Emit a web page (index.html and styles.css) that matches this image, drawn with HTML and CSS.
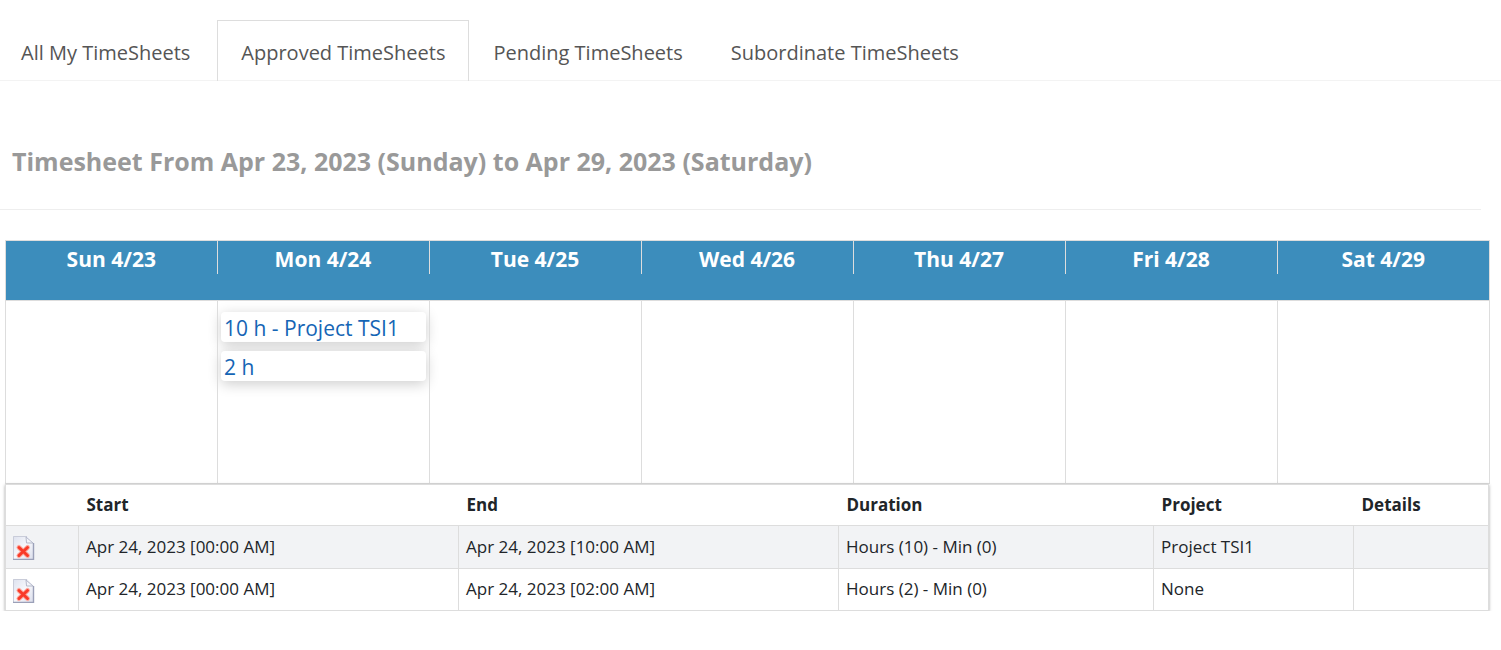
FILE: index.html
```html
<!DOCTYPE html>
<html lang="en">
<head>
    <meta charset="UTF-8">
    <meta name="viewport" content="width=device-width, initial-scale=1.0">
    <title>Approved TimeSheets</title>
    <link rel="stylesheet" href="styles.css">
</head>
<body>
    <svg class="sprite" aria-hidden="true">
        <defs>
            <linearGradient id="paper" x1="0" y1="0" x2="1" y2="1">
                <stop offset="0" stop-color="#dde1ee"/>
                <stop offset="0.5" stop-color="#f7f8fc"/>
                <stop offset="1" stop-color="#d9dcea"/>
            </linearGradient>
        </defs>
        <symbol id="delete-page" viewBox="0 0 22 24">
            <path d="M0 0H14L21 7V24H0Z" fill="url(#paper)"/>
            <path d="M0.5 23V0.5H14" fill="none" stroke="#c9ccd9"/>
            <path d="M20.5 7V23.5H0" fill="none" stroke="#9ba0b8" stroke-width="1.4"/>
            <path d="M13 1L13.5 7H20Z" fill="#f4f5fa" stroke="#b4b8ca"/>
            <path d="M6 11.5L14.5 19.5M14.5 11.5L6 19.5" fill="none" stroke="#fbaaa0" stroke-width="5" stroke-linecap="round"/>
            <path d="M6 11.5L14.5 19.5M14.5 11.5L6 19.5" fill="none" stroke="#f93a28" stroke-width="3" stroke-linecap="round"/>
        </symbol>
    </svg>

    <nav class="tabs">
        <a href="#all">All My TimeSheets</a>
        <a href="#approved" class="active">Approved TimeSheets</a>
        <a href="#pending">Pending TimeSheets</a>
        <a href="#subordinate">Subordinate TimeSheets</a>
    </nav>

    <h1>Timesheet From Apr 23, 2023 (Sunday) to Apr 29, 2023 (Saturday)</h1>

    <div class="content">
        <table class="week">
            <thead>
                <tr>
                    <th><div class="day">Sun 4/23</div></th>
                    <th><div class="day">Mon 4/24</div></th>
                    <th><div class="day">Tue 4/25</div></th>
                    <th><div class="day">Wed 4/26</div></th>
                    <th><div class="day">Thu 4/27</div></th>
                    <th><div class="day">Fri 4/28</div></th>
                    <th><div class="day">Sat 4/29</div></th>
                </tr>
            </thead>
            <tbody>
                <tr>
                    <td></td>
                    <td>
                        <a href="#entry1" class="entry">10 h - Project TSI1</a>
                        <a href="#entry2" class="entry">2 h</a>
                    </td>
                    <td></td>
                    <td></td>
                    <td></td>
                    <td></td>
                    <td></td>
                </tr>
            </tbody>
        </table>

        <div class="details-box">
            <table class="details">
                <colgroup>
                    <col class="col-action">
                    <col class="col-time">
                    <col class="col-time">
                    <col class="col-duration">
                    <col class="col-project">
                    <col>
                </colgroup>
                <thead>
                    <tr>
                        <th></th>
                        <th>Start</th>
                        <th>End</th>
                        <th>Duration</th>
                        <th>Project</th>
                        <th>Details</th>
                    </tr>
                </thead>
                <tbody>
                    <tr>
                        <td><button type="button" class="delete" aria-label="Delete"><svg><use href="#delete-page"/></svg></button></td>
                        <td>Apr 24, 2023 [00:00 AM]</td>
                        <td>Apr 24, 2023 [10:00 AM]</td>
                        <td>Hours (10) - Min (0)</td>
                        <td>Project TSI1</td>
                        <td></td>
                    </tr>
                    <tr>
                        <td><button type="button" class="delete" aria-label="Delete"><svg><use href="#delete-page"/></svg></button></td>
                        <td>Apr 24, 2023 [00:00 AM]</td>
                        <td>Apr 24, 2023 [02:00 AM]</td>
                        <td>Hours (2) - Min (0)</td>
                        <td>None</td>
                        <td></td>
                    </tr>
                </tbody>
            </table>
        </div>
    </div>
</body>
</html>
```
FILE: styles.css
```css
* {
    box-sizing: border-box;
}
body {
    font-family: "Segoe UI", "Open Sans", sans-serif;
    background-color: #fff;
    color: #212529;
    margin: 0;
    padding-top: 20px;
}
.sprite {
    position: absolute;
    width: 0;
    height: 0;
}
.tabs {
    display: flex;
    height: 61px;
    border-bottom: 1px solid #f3f3f3;
}
.tabs a {
    height: 61px;
    padding: 0 23px;
    border: 1px solid transparent;
    border-bottom: none;
    color: #555;
    font-size: 20px;
    line-height: 64px;
    text-decoration: none;
    white-space: nowrap;
}
.tabs a:first-child {
    padding: 0 26px 0 20px;
}
.tabs a.active {
    border-color: #ddd;
}
h1 {
    margin: 0 20px 30px 0;
    padding: 60px 12px 28px;
    border-bottom: 1px solid #eee;
    color: #999;
    font-size: 25px;
    line-height: 40px;
}
.content {
    padding: 0 11px 0 5px;
}
table {
    width: 100%;
    border-collapse: collapse;
    table-layout: fixed;
}
.week th {
    height: 60px;
    padding: 0;
    border: 1px solid #ddd;
    border-left: none;
    border-right: none;
    background-color: #3c8dbc;
    color: #fff;
    font-size: 21px;
    line-height: 36px;
    vertical-align: top;
}
.week th:first-child {
    border-left: 1px solid #ddd;
}
.week th:last-child {
    border-right: 1px solid #ddd;
}
.day {
    height: 33px;
    border-right: 1px solid #ddd;
}
.week th:last-child .day {
    border-right: none;
}
.week td {
    height: 183px;
    padding: 11px 3px 0;
    border: 1px solid #ddd;
    vertical-align: top;
}
.entry {
    display: block;
    height: 30px;
    margin-bottom: 9px;
    padding-left: 3px;
    border-radius: 4px;
    background-color: #fff;
    box-shadow: 0 3px 14px rgba(0, 0, 0, 0.2);
    color: #1565b5;
    font-size: 21px;
    line-height: 32px;
    text-decoration: none;
}
.details-box {
    margin-right: 1px;
    box-shadow: 0 1px 3px rgba(0, 0, 0, 0.35);
}
.details {
    border: 1px solid #ddd;
    font-size: 17px;
}
.details th {
    height: 41px;
    padding: 0 8px 2px;
    border-bottom: 1px solid #ddd;
    text-align: left;
}
.details td {
    height: 43px;
    padding: 0 7px 2px;
    border: 1px solid #ddd;
}
.details tbody tr:last-child td {
    height: 42px;
}
.details tbody tr:nth-child(odd) {
    background-color: #f2f3f5;
}
.col-action {
    width: 73px;
}
.col-time {
    width: 380px;
}
.col-duration {
    width: 315px;
}
.col-project {
    width: 200px;
}
.delete {
    display: block;
    margin-top: 4px;
    padding: 0;
    border: none;
    background: none;
    cursor: pointer;
}
.delete svg {
    display: block;
    width: 22px;
    height: 24px;
}
```
